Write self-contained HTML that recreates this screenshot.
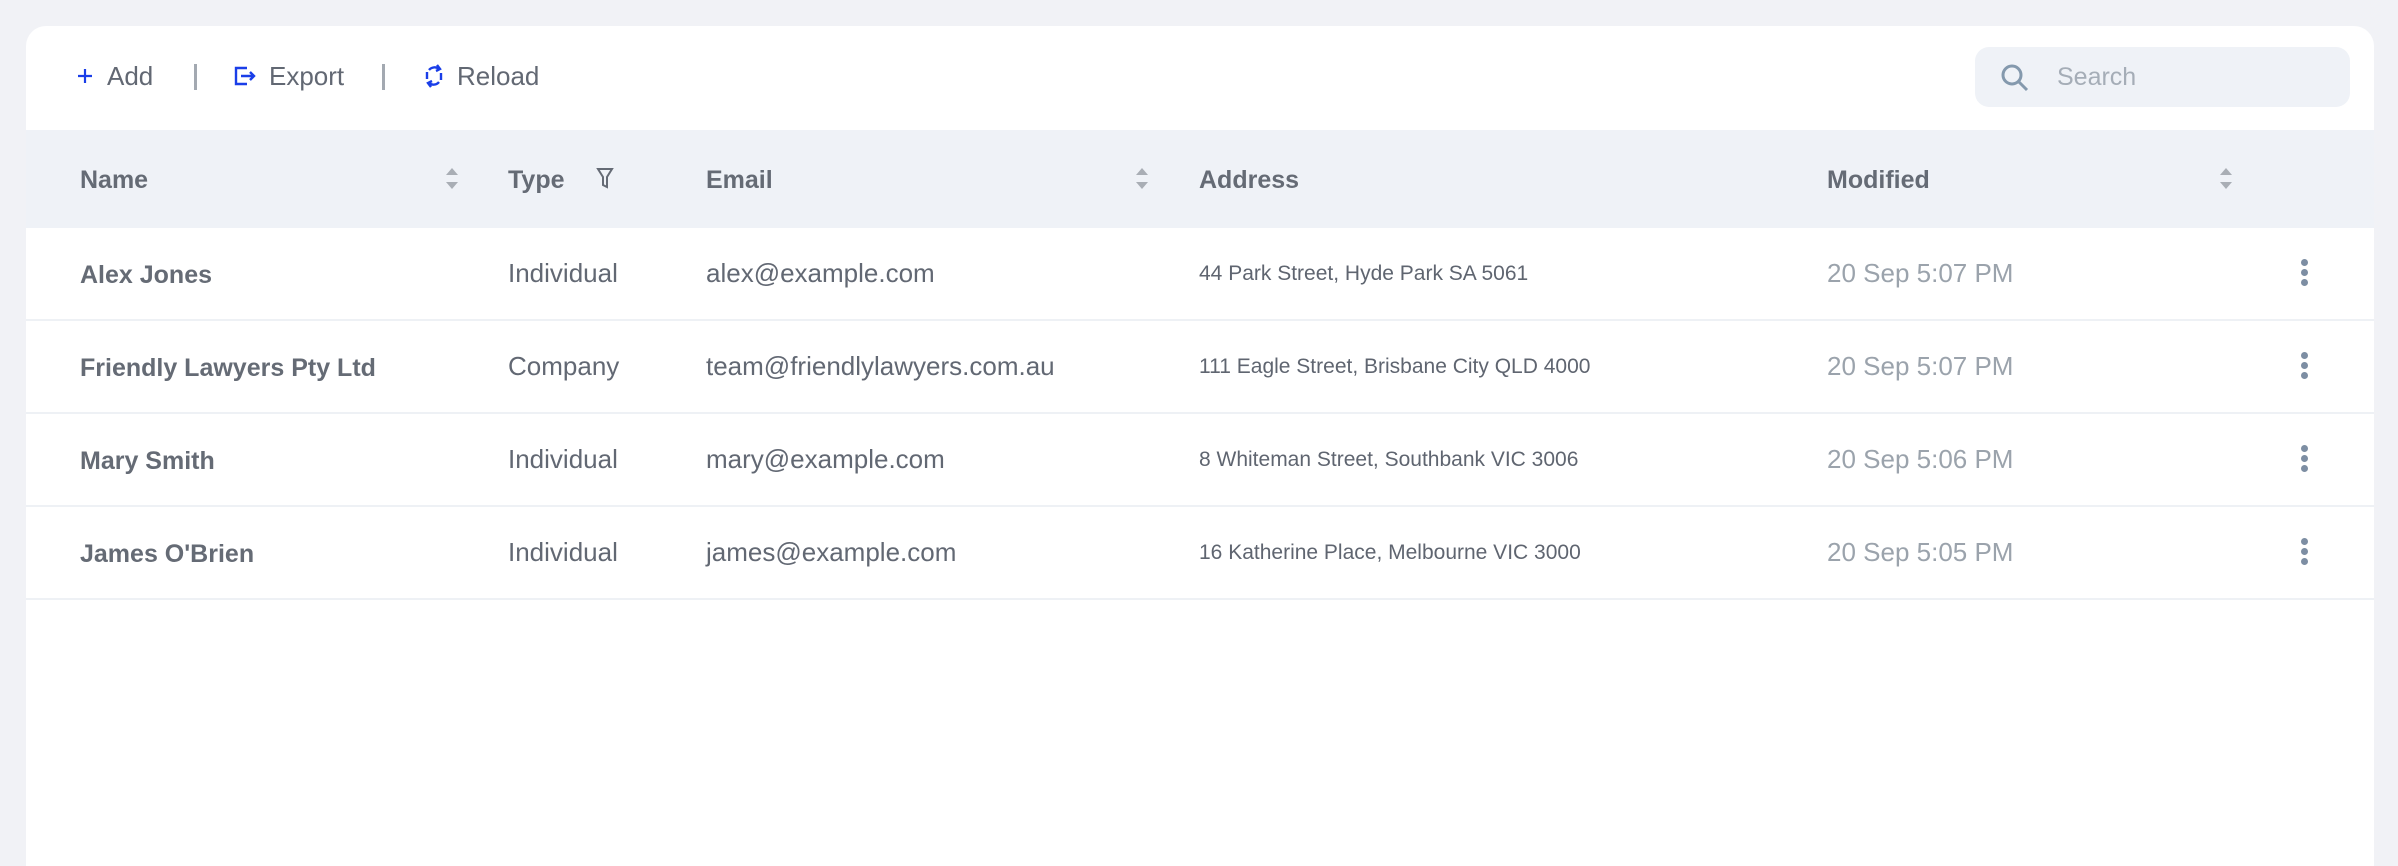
<!DOCTYPE html>
<html><head><meta charset="utf-8"><style>
*{margin:0;padding:0;box-sizing:border-box}
body{width:2398px;height:848px;background:#f1f2f6;font-family:"Liberation Sans",sans-serif;color:#626873;overflow:hidden;position:relative}
.card{position:absolute;left:26px;top:26px;width:2348px;height:840px;background:#fff;border-radius:20px 20px 0 0;overflow:hidden}
.abs{position:absolute;white-space:nowrap}
.tb{font-size:26px;color:#626873;top:35px}
.sep{position:absolute;top:38px;width:3px;height:26px;background:#a3a9b1}
.search{position:absolute;left:1949px;top:21px;width:375px;height:60px;background:#eff2f7;border-radius:14px}
.head{position:absolute;left:0;top:104px;width:2348px;height:98px;background:#eff2f7}
.hd{font-size:25px;font-weight:bold;color:#656b75;top:36px}
.row{position:absolute;left:0;width:2348px;height:93px;border-bottom:2px solid #eef1f5}
.c{font-size:26px;top:30px}
.name{font-weight:bold;color:#656b75;font-size:25px;top:33px}
.addr{font-size:21px;top:34px;color:#5f6570}
.mod{color:#9ba3ac}
.dots{position:absolute;left:2275px;top:31px;width:8px}
.dots i{display:block;width:7px;height:7px;border-radius:50%;background:#7d8ea3;margin-bottom:3px}
</style></head><body>
<div class="card">
 <svg class="abs" style="left:48px;top:39px" width="22" height="22" viewBox="0 0 22 22"><path d="M11 4v14M4 11h14" stroke="#1a3ee8" stroke-width="2.2"/></svg>
 <div class="abs tb" style="left:81px">Add</div>
 <div class="sep" style="left:168px"></div>
 <svg class="abs" style="left:206px;top:38px" width="26" height="24" viewBox="0 0 26 24"><path d="M15 4H4v16h11" fill="none" stroke="#1a3ee8" stroke-width="2.4"/><path d="M9 12h13M18 8l4 4-4 4" fill="none" stroke="#1a3ee8" stroke-width="2.4"/></svg>
 <div class="abs tb" style="left:243px">Export</div>
 <div class="sep" style="left:356px"></div>
 <svg class="abs" style="left:396px;top:36px" width="24" height="28" viewBox="0 0 24 28"><path d="M7 8a7 7 0 0 1 10-1M17 20a7 7 0 0 1-10 1" fill="none" stroke="#1a3ee8" stroke-width="2.4"/><path d="M15 3l3 4-4 2M9 25l-3-4 4-2" fill="none" stroke="#1a3ee8" stroke-width="2.4"/><path d="M5 10v7M19 11v7" stroke="#1a3ee8" stroke-width="2.4"/></svg>
 <div class="abs tb" style="left:431px">Reload</div>
 <div class="search">
  <svg class="abs" style="left:24px;top:15px" width="32" height="32" viewBox="0 0 32 32"><circle cx="13" cy="13" r="9" fill="none" stroke="#8499ad" stroke-width="3"/><path d="M20 20l8 8" stroke="#8499ad" stroke-width="3"/></svg>
  <div class="abs" style="left:82px;top:16px;font-size:25px;color:#a5adb7">Search</div>
 </div>
 <div class="head">
  <div class="abs hd" style="left:54px">Name</div>
  <svg class="abs" style="left:418px;top:36px" width="16" height="26" viewBox="0 0 16 26"><path d="M2 9L8 2l6 7zM2 16l6 7 6-7z" fill="#a9aeb5"/></svg>
  <div class="abs hd" style="left:482px">Type</div>
  <svg class="abs" style="left:570px;top:37px" width="18" height="22" viewBox="0 0 18 22"><path d="M2 2h14l-5 8v10l-4-2v-8z" fill="none" stroke="#656b75" stroke-width="2"/></svg>
  <div class="abs hd" style="left:680px">Email</div>
  <svg class="abs" style="left:1108px;top:36px" width="16" height="26" viewBox="0 0 16 26"><path d="M2 9L8 2l6 7zM2 16l6 7 6-7z" fill="#a9aeb5"/></svg>
  <div class="abs hd" style="left:1173px">Address</div>
  <div class="abs hd" style="left:1801px">Modified</div>
  <svg class="abs" style="left:2192px;top:36px" width="16" height="26" viewBox="0 0 16 26"><path d="M2 9L8 2l6 7zM2 16l6 7 6-7z" fill="#a9aeb5"/></svg>
 </div>
 <div class="row" style="top:202px">
  <div class="abs c name" style="left:54px">Alex Jones</div><div class="abs c" style="left:482px">Individual</div><div class="abs c" style="left:680px">alex@example.com</div><div class="abs addr" style="left:1173px">44 Park Street, Hyde Park SA 5061</div><div class="abs c mod" style="left:1801px">20 Sep 5:07 PM</div><div class="dots"><i></i><i></i><i></i></div>
 </div>
 <div class="row" style="top:295px">
  <div class="abs c name" style="left:54px">Friendly Lawyers Pty Ltd</div><div class="abs c" style="left:482px">Company</div><div class="abs c" style="left:680px">team@friendlylawyers.com.au</div><div class="abs addr" style="left:1173px">111 Eagle Street, Brisbane City QLD 4000</div><div class="abs c mod" style="left:1801px">20 Sep 5:07 PM</div><div class="dots"><i></i><i></i><i></i></div>
 </div>
 <div class="row" style="top:388px">
  <div class="abs c name" style="left:54px">Mary Smith</div><div class="abs c" style="left:482px">Individual</div><div class="abs c" style="left:680px">mary@example.com</div><div class="abs addr" style="left:1173px">8 Whiteman Street, Southbank VIC 3006</div><div class="abs c mod" style="left:1801px">20 Sep 5:06 PM</div><div class="dots"><i></i><i></i><i></i></div>
 </div>
 <div class="row" style="top:481px">
  <div class="abs c name" style="left:54px">James O'Brien</div><div class="abs c" style="left:482px">Individual</div><div class="abs c" style="left:680px">james@example.com</div><div class="abs addr" style="left:1173px">16 Katherine Place, Melbourne VIC 3000</div><div class="abs c mod" style="left:1801px">20 Sep 5:05 PM</div><div class="dots"><i></i><i></i><i></i></div>
 </div>
</div>
</body></html>
